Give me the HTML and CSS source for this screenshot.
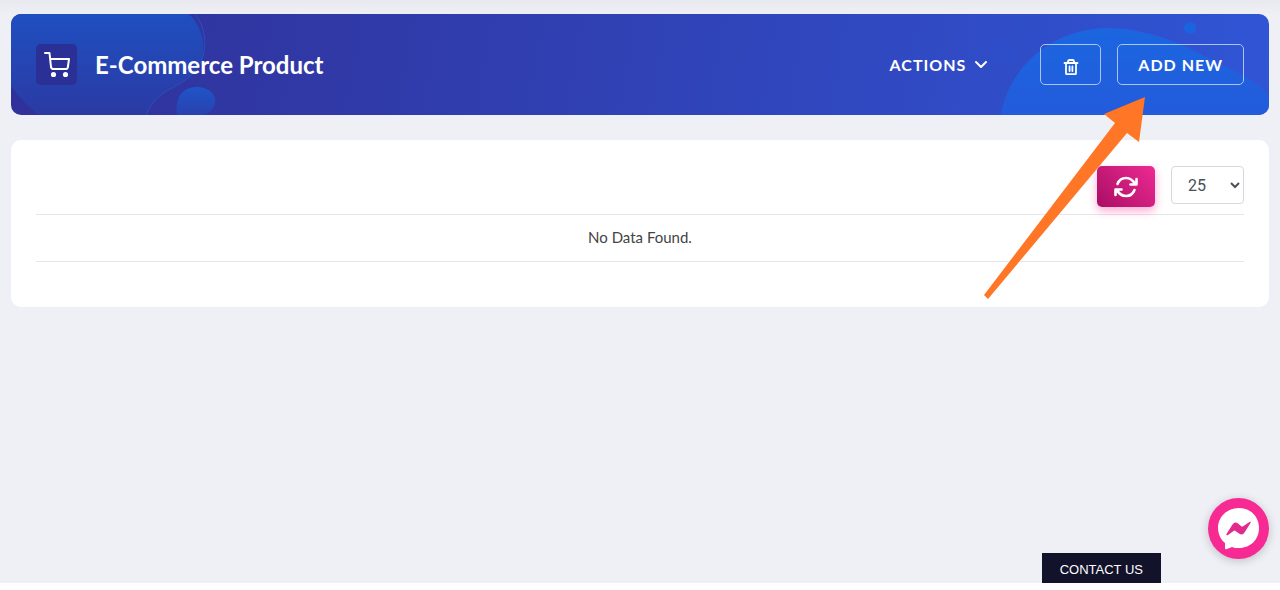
FILE: index.html
```html
<!DOCTYPE html>
<html lang="en">
<head>
<meta charset="utf-8">
<meta name="viewport" content="width=device-width, initial-scale=1">
<title>E-Commerce Product</title>
<link rel="stylesheet" href="styles.css">
</head>
<body>
<div class="page">
  <header class="banner">
    <svg class="banner-art banner-art-left" width="220" height="101" viewBox="0 0 220 101" aria-hidden="true">
      <defs>
        <linearGradient id="blobL" x1="0" y1="0" x2="0" y2="1"><stop offset="0" stop-color="#1f4fc0"/><stop offset="1" stop-color="#2b3aa4"/></linearGradient>
        <linearGradient id="dotL" x1="0" y1="0" x2="0" y2="1"><stop offset="0" stop-color="#1e55c8"/><stop offset="1" stop-color="#2a41ae"/></linearGradient>
      </defs>
      <path fill="url(#blobL)" d="M0 0H178C190 11 194 28 192 43C185 65 166 70 151 80C143 86 138 94 135 101H28C16 92 7 82 0 72Z"/>
      <path fill="none" stroke="#2d58c5" stroke-opacity=".7" d="M184 0C194 12 196 30 192 43C185 65 166 70 151 80C143 86 138 94 135 101"/>
      <path fill="url(#dotL)" d="M166 101C164 84 170 74 185 73C197 73 206 80 204 89C203 96 198 98 194 101Z"/>
    </svg>
    <svg class="banner-art banner-art-right" width="280" height="101" viewBox="0 0 280 101" aria-hidden="true">
      <defs>
        <linearGradient id="blobR" x1="0" y1="0" x2="0" y2="1"><stop offset="0" stop-color="#1b66e0"/><stop offset="1" stop-color="#235bdb"/></linearGradient>
      </defs>
      <path fill="url(#blobR)" d="M12 101C18 60 57 15 118 14C171 15 207 38 237 53C258 63 273 72 280 83V101Z"/>
      <circle cx="201" cy="14" r="6" fill="#1b64e0"/>
      <circle cx="13" cy="39" r="14" fill="#2c50ce" fill-opacity=".35"/>
    </svg>
    <span class="brand-icon">
      <svg width="30" height="30" viewBox="0 0 30 30" fill="none" stroke="#fff" stroke-width="2" stroke-linecap="round" stroke-linejoin="round" aria-hidden="true">
        <path d="M3 3H7.500L9 17Q9.400 19 11.500 19H24Q25.500 19 25.800 17.500L27 9H8.200"/>
        <circle cx="11.500" cy="24.500" r="1.600" fill="#fff"/><circle cx="23.500" cy="24.500" r="1.600" fill="#fff"/>
      </svg>
    </span>
    <h1 class="title">E-Commerce Product</h1>
    <div class="toolbar">
      <button class="actions" type="button">Actions
        <svg width="14" height="10" viewBox="0 0 14 10" fill="none" stroke="#fff" stroke-width="2" stroke-linecap="round" stroke-linejoin="round" aria-hidden="true"><path d="M2 2L7 7L12 2"/></svg>
      </button>
      <button class="outline trash" type="button" aria-label="Delete">
        <svg width="16" height="18" viewBox="0 0 16 18" fill="none" stroke="#fff" stroke-width="1.800" stroke-linecap="round" stroke-linejoin="round" aria-hidden="true"><path d="M1.500 5H14.500M5 4.500V3.500Q5 2 6.500 2H9.500Q11 2 11 3.500V4.500M3 5V15.500Q3 16.200 3.700 16.200H12.300Q13 16.200 13 15.500V5M6.600 8.500V13M9.400 8.500V13"/></svg>
      </button>
      <button class="outline add" type="button">Add New</button>
    </div>
  </header>

  <main class="card">
    <div class="controls">
      <button class="refresh" type="button" aria-label="Refresh">
        <svg width="26" height="22" viewBox="0 0 26 22" fill="none" stroke="#fff" stroke-width="2.600" stroke-linecap="round" stroke-linejoin="round" aria-hidden="true">
          <path d="M4.500 8C6 4 9.500 2 13 2C16.800 2 19.800 4 22 8M23.500 3V8.500H17.500M21.500 14C20 18 16.500 20 13 20C9.200 20 6.200 18 4 14M2.500 19V13.500H8.500"/>
        </svg>
      </button>
      <select class="page-size" aria-label="Rows per page"><option>25</option><option>50</option><option>100</option></select>
    </div>
    <table class="data"><tbody><tr><td>No Data Found.</td></tr></tbody></table>
  </main>

  <svg class="pointer" width="170" height="210" viewBox="0 0 170 210" aria-hidden="true"><path fill="#ff7626" d="M165 7L159 52L147 43L8 209L4 205L135 33L124 24Z"/></svg>
  <button class="contact" type="button">CONTACT US</button>
  <button class="messenger" type="button" aria-label="Open chat">
    <svg width="61" height="61" viewBox="0 0 61 61" aria-hidden="true">
      <path fill="#fff" d="M31 10C19 10 10 19 10 30C10 36 13 42 17 45V50Q17 52 19 51L24 49C26 50 28 50 31 50C43 50 51 41 51 30C51 19 43 10 31 10Z"/>
      <path fill="#e22a8c" d="M18.500 36L24.500 26.500Q27 23 30 25.500L33 28Q34 29 35.500 28L41.500 24Q43.500 23 42.500 25L36.500 34.500Q34.500 38 31 35.500L27.500 33Q26.500 32.200 25.500 33L20 37Q18 38 18.500 36Z"/>
    </svg>
  </button>
</div>
</body>
</html>
```
FILE: styles.css
```css
* { box-sizing: border-box; }
body {
  margin: 0;
  background: #fff;
  font-family: Lato, "Liberation Sans", sans-serif;
  color: #3f4254;
}
button { font: inherit; cursor: pointer; }
.page {
  position: relative;
  min-height: calc(100vh - 7px);
  padding: 14px 11px;
  background: linear-gradient(#e8eaf0, #eff0f6 16px);
}
.banner {
  position: relative;
  display: flex;
  align-items: center;
  gap: 18px;
  padding: 30px 25px;
  border-radius: 10px;
  overflow: hidden;
  background: linear-gradient(100deg, #30309a, #3039a6 25%, #304bc5 75%, #3055d5);
}
.banner-art { position: absolute; top: 0; }
.banner-art-left { left: 0; }
.banner-art-right { right: 0; }
.brand-icon {
  position: relative;
  display: grid;
  place-items: center;
  width: 41px;
  height: 41px;
  border-radius: 5px;
  background: #2a3095;
}
.title {
  position: relative;
  flex: 1;
  margin: 0;
  font-size: 24px;
  line-height: 32px;
  font-weight: 700;
  color: #fff;
}
.toolbar {
  position: relative;
  display: flex;
  align-items: center;
  gap: 16px;
}
.actions, .outline {
  height: 41px;
  display: flex;
  align-items: center;
  justify-content: center;
  background: none;
  color: #fff;
  font-size: 16px;
  font-weight: 700;
  letter-spacing: 1px;
  text-transform: uppercase;
}
.actions {
  gap: 8px;
  margin-right: 36px;
  padding: 0;
  border: 0;
}
.outline {
  border: 1px solid #a9c5f5;
  border-radius: 5px;
}
.trash { width: 61px; padding: 4px 0 0; }
.add { padding: 0 20px; }
.card {
  margin-top: 25px;
  padding: 26px 25px 45px;
  border-radius: 10px;
  background: #fff;
}
.controls {
  display: flex;
  justify-content: flex-end;
  align-items: flex-start;
  gap: 16px;
  padding-bottom: 7px;
}
.refresh {
  display: grid;
  place-items: center;
  width: 58px;
  height: 41px;
  padding: 0;
  border: 0;
  border-radius: 5px;
  background: linear-gradient(45deg, #a90e63, #ee2a93);
  box-shadow: 0 4px 10px #f72a9366;
}
.page-size {
  width: 73px;
  height: 38px;
  padding: 0 0 0 12px;
  border: 1px solid #d5d7dc;
  border-radius: 4px;
  background: #fff;
  color: #495057;
  font-family: Roboto, sans-serif;
  font-size: 16px;
}
.data {
  width: 100%;
  border-collapse: collapse;
  border-top: 1px solid #e6e6ea;
  border-bottom: 1px solid #e6e6ea;
}
.data td {
  padding: 12px 13px 14px;
  text-align: center;
  font-size: 15px;
  line-height: 20px;
  color: #444;
}
.pointer {
  position: absolute;
  top: 90px;
  right: 130px;
  pointer-events: none;
}
.contact {
  position: absolute;
  right: 119px;
  bottom: 0;
  padding: 9px 18px 5px;
  border: 0;
  background: #12122a;
  color: #fff;
  font-family: "Liberation Sans", sans-serif;
  font-size: 13px;
  line-height: 16px;
}
.messenger {
  position: absolute;
  right: 11px;
  bottom: 24px;
  display: grid;
  width: 61px;
  height: 61px;
  padding: 0;
  border: 0;
  border-radius: 50%;
  background: #f72a93;
  box-shadow: 0 2px 10px #0003;
}
```
